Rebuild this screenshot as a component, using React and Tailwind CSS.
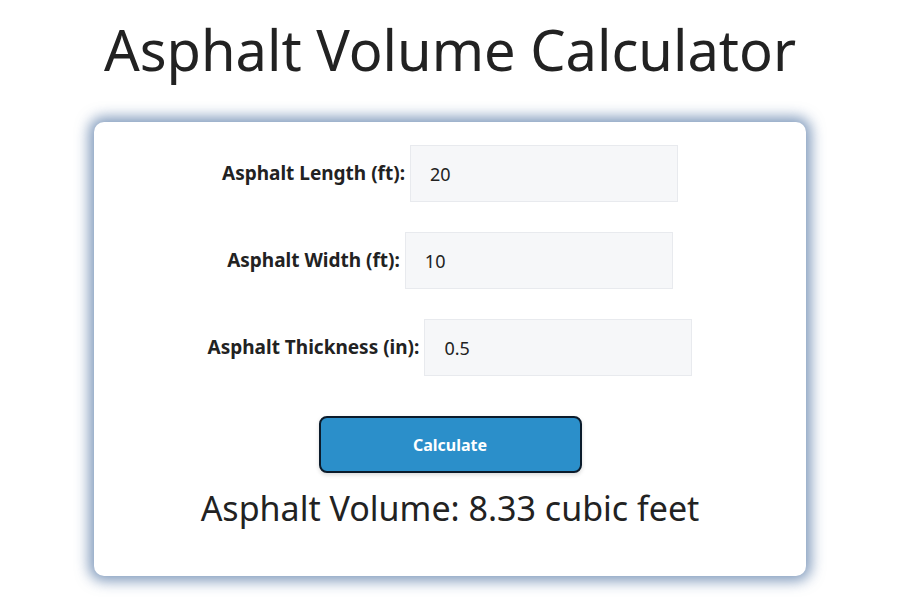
import React, { useState } from "react";

export default function App() {
  const [form, setForm] = useState({ length: "20", width: "10", thickness: "0.5" });
  const [volume, setVolume] = useState("8.33");

  const calculate = () => {
    const v =
      parseFloat(form.length) * parseFloat(form.width) * (parseFloat(form.thickness) / 12);
    setVolume(isNaN(v) ? "0.00" : v.toFixed(2));
  };

  const rows = [
    { key: "length", label: "Asphalt Length (ft):" },
    { key: "width", label: "Asphalt Width (ft):" },
    { key: "thickness", label: "Asphalt Thickness (in):" },
  ];

  return (
    <div className="min-h-screen bg-white font-['Noto_Sans',sans-serif] text-[#222]">
      <div className="w-[900px]">
        <h1 className="text-center text-[56px] leading-none pt-[21px] pb-[45px]">
          Asphalt Volume Calculator
        </h1>
        <div className="mx-auto w-[712px] h-[454px] rounded-[10px] bg-white shadow-[0_0_14px_5px_rgba(85,120,165,0.75)] pt-[23px] flex flex-col items-center">
          {rows.map((r) => (
            <div key={r.key} className="flex items-center gap-[5px] mb-[30px]">
              <label className="font-bold text-[19px]">{r.label}</label>
              <input
                type="text"
                value={form[r.key]}
                onChange={(e) => setForm({ ...form, [r.key]: e.target.value })}
                className="w-[268px] h-[57px] bg-[#f6f7f9] border border-[#e8eaee] px-[19px] text-[18px] outline-none"
              />
            </div>
          ))}
          <button
            onClick={calculate}
            className="mt-[10px] w-[263px] h-[57px] rounded-[8px] bg-[#2b8fca] border-2 border-[#0b1b2b] text-white font-bold text-[16px] shadow-[0_2px_4px_rgba(0,0,0,0.15)]"
          >
            Calculate
          </button>
          <p className="mt-[10px] text-[34px]">Asphalt Volume: {volume} cubic feet</p>
        </div>
      </div>
    </div>
  );
}
